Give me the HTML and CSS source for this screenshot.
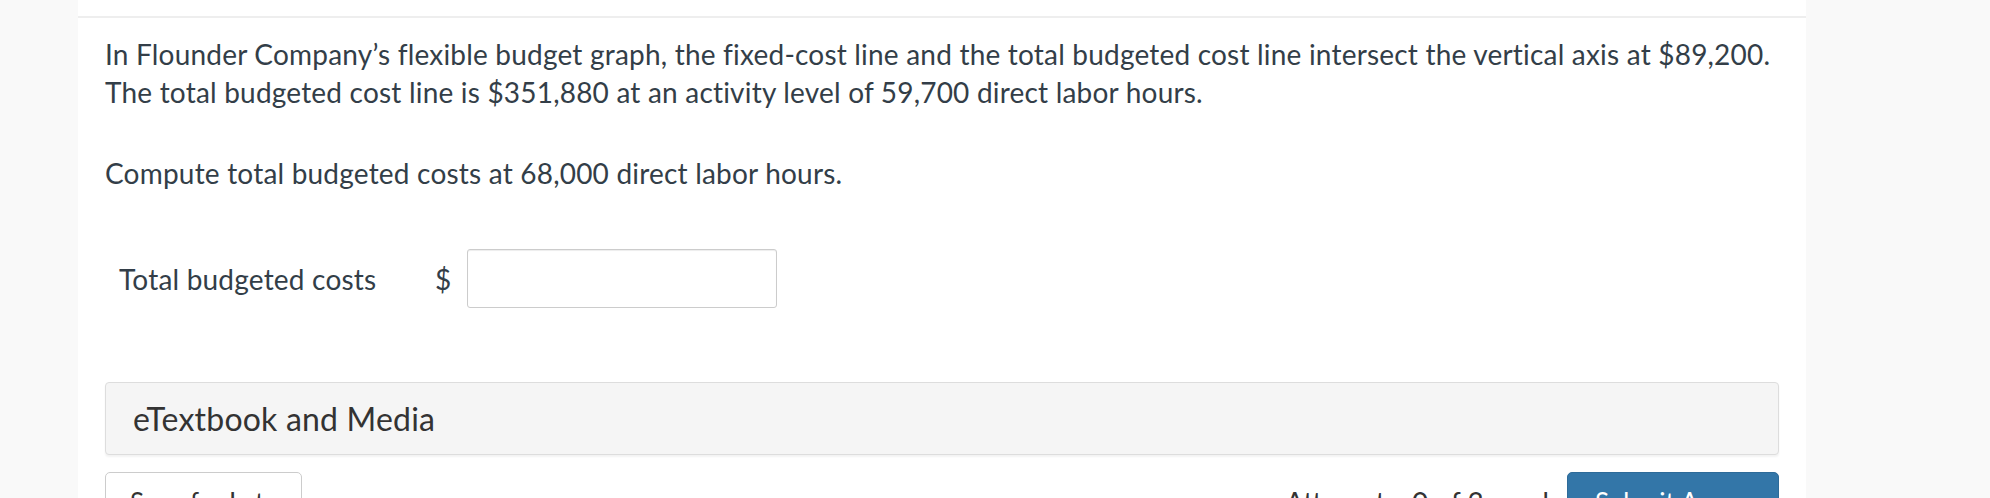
FILE: index.html
```html
<!DOCTYPE html>
<html lang="en">
<head>
<meta charset="utf-8">
<title>Question</title>
<link rel="stylesheet" href="styles.css">
</head>
<body>
<main class="card">
  <div class="topbar"></div>
  <div class="content">
    <p class="q">In Flounder Company’s flexible budget graph, the fixed-cost line and the total budgeted cost line intersect the vertical axis at $89,200.<br>The total budgeted cost line is $351,880 at an activity level of 59,700 direct labor hours.</p>
    <p class="q">Compute total budgeted costs at 68,000 direct labor hours.</p>
    <div class="answer-row">
      <label class="answer-label" for="ans">Total budgeted costs</label>
      <span class="currency">$</span>
      <input class="answer-input" id="ans" type="text">
    </div>
    <div class="panel">eTextbook and Media</div>
    <div class="actions">
      <button class="btn btn-save">Save for Later</button>
      <div class="actions-right">
        <span class="attempts">Attempts: 0 of 3 used</span>
        <button class="btn btn-primary">Submit Answer</button>
      </div>
    </div>
  </div>
</main>
</body>
</html>
```
FILE: styles.css
```css
html, body {
  margin: 0;
  padding: 0;
  height: 100%;
  overflow: hidden;
}
body {
  background: #f9f9f9;
  font-family: Lato, "Open Sans", sans-serif;
  color: #333e48;
}
.card {
  margin-left: 78px;
  width: 1728px;
  min-height: 100%;
  background: #ffffff;
}
.topbar {
  height: 16px;
  border-bottom: 2px solid #eeeeee;
}
.content {
  padding: 17px 27px 0 27px;
}
.q {
  margin: 0 0 43px 0;
  font-size: 28px;
  letter-spacing: 0.2px;
  line-height: 38px;
}
.answer-row {
  display: flex;
  align-items: center;
  margin-top: 57px;
  padding-left: 14px;
}
.answer-label {
  width: 316px;
  font-size: 28px;
  letter-spacing: 0.2px;
}
.currency {
  font-size: 28px;
  margin-right: 16px;
}
.answer-input {
  box-sizing: border-box;
  width: 310px;
  height: 59px;
  border: 1px solid #cccccc;
  border-radius: 3px;
  box-shadow: inset 0 1px 1px rgba(0, 0, 0, 0.075);
  font: inherit;
  font-size: 26px;
  padding: 0 12px;
  margin: 0;
}
.panel {
  box-sizing: border-box;
  margin-top: 74px;
  height: 73px;
  display: flex;
  align-items: center;
  padding-left: 27px;
  background: #f5f5f5;
  border: 1px solid #dddddd;
  border-radius: 4px;
  box-shadow: 0 2px 2px rgba(0, 0, 0, 0.05);
  font-size: 32px;
  letter-spacing: 0.2px;
  color: #333333;
}
.actions {
  display: flex;
  justify-content: space-between;
  align-items: flex-start;
  margin-top: 17px;
}
.actions-right {
  display: flex;
  align-items: flex-start;
}
.attempts {
  font-size: 28px;
  line-height: 37px;
  padding-top: 12px;
  color: #333333;
  margin-right: 18px;
  white-space: nowrap;
}
.btn {
  box-sizing: border-box;
  font-family: Lato, "Open Sans", sans-serif;
  font-size: 26px;
  line-height: 37px;
  padding: 11px 24px;
  border: 1px solid #cccccc;
  border-radius: 5px;
  background: #ffffff;
  color: #333333;
  margin: 0;
  white-space: nowrap;
  text-align: left;
}
.btn-save {
  width: 197px;
}
.btn-primary {
  width: 212px;
  padding-left: 27px;
  background: #3376a8;
  border-color: #2e6b99;
  color: #ffffff;
}
```
